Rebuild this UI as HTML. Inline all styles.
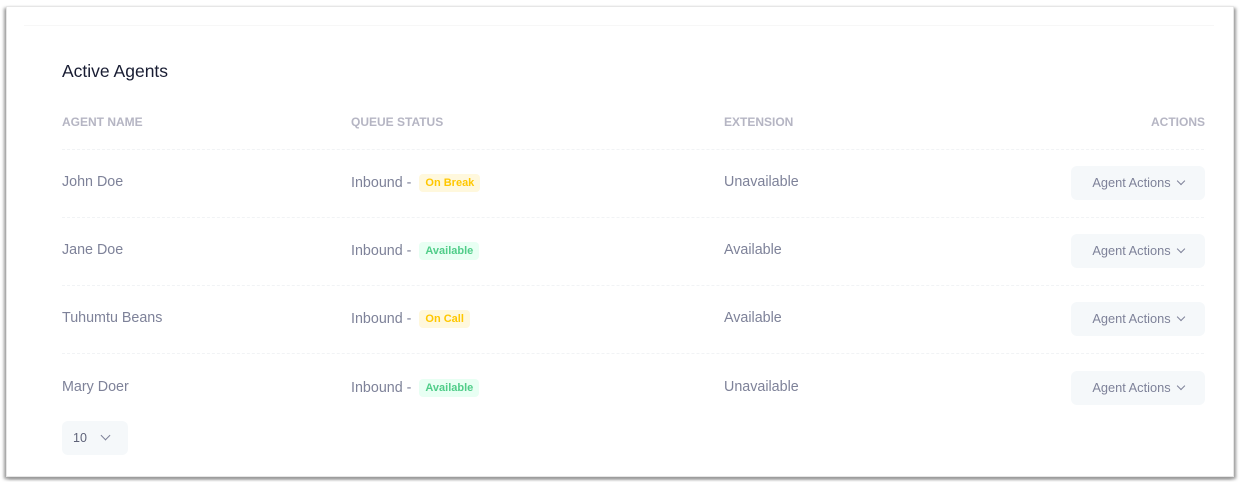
<!DOCTYPE html>
<html><head><style>
body{margin:0;width:1242px;height:482px;background:#fff;font-family:"Liberation Sans",sans-serif;position:relative;overflow:hidden}
.card{position:absolute;left:6px;top:6px;width:1226px;height:469px;background:#fff;border:1px solid #e6e6e6;box-shadow:-2px 2px 3px #9a9a9a,2px 2px 3px #9a9a9a}
.a{position:absolute;white-space:nowrap}
h1{position:absolute;left:62px;top:61px;margin:0;font-size:17.5px;font-weight:500;color:#181c32}
.th{font-size:12px;color:#b5b5c3;font-weight:600;top:115px}
.line{position:absolute;left:62px;width:1142px;border-top:1px dashed #f1f3f5}
.t{font-size:14.3px;color:#7e8299;font-weight:500}
.b{display:inline-block;font-size:11px;font-weight:700;padding:3px 6px;border-radius:4px;margin-left:4px;vertical-align:1px}
.y{background:#fff8dd;color:#ffc700}.g{background:#e8fff3;color:#50cd89}
.btn{position:absolute;left:1071px;width:134px;height:34px;background:#f5f8fa;border-radius:6px;font-size:12.8px;color:#7e8299;line-height:34px;text-align:center}
.chev{display:inline-block;width:5px;height:5px;border-right:1.5px solid #7e8299;border-bottom:1.5px solid #7e8299;transform:rotate(45deg);margin-left:7px;vertical-align:3px}
</style></head><body>
<div class="card"></div>
<div class="a" style="left:24px;top:25px;width:1190px;border-top:1px solid #f7f7f7"></div>
<h1>Active Agents</h1>
<div class="a th" style="left:62px">AGENT NAME</div>
<div class="a th" style="left:351px">QUEUE STATUS</div>
<div class="a th" style="left:724px">EXTENSION</div>
<div class="a th" style="left:1149px;width:56px;text-align:right">ACTIONS</div>
<div class="line" style="top:149px"></div>
<div class="line" style="top:217px"></div>
<div class="line" style="top:285px"></div>
<div class="line" style="top:353px"></div>

<div class="a t" style="left:62px;top:174px">John Doe</div>
<div class="a t" style="left:351px;top:174px">Inbound - <span class="b y">On Break</span></div>
<div class="a t" style="left:724px;top:174px">Unavailable</div>
<div class="btn" style="top:166px">Agent Actions<span class="chev"></span></div>

<div class="a t" style="left:62px;top:242px">Jane Doe</div>
<div class="a t" style="left:351px;top:242px">Inbound - <span class="b g">Available</span></div>
<div class="a t" style="left:724px;top:242px">Available</div>
<div class="btn" style="top:234px">Agent Actions<span class="chev"></span></div>

<div class="a t" style="left:62px;top:310px">Tuhumtu Beans</div>
<div class="a t" style="left:351px;top:310px">Inbound - <span class="b y">On Call</span></div>
<div class="a t" style="left:724px;top:310px">Available</div>
<div class="btn" style="top:302px">Agent Actions<span class="chev"></span></div>

<div class="a t" style="left:62px;top:379px">Mary Doer</div>
<div class="a t" style="left:351px;top:379px">Inbound - <span class="b g">Available</span></div>
<div class="a t" style="left:724px;top:379px">Unavailable</div>
<div class="btn" style="top:371px">Agent Actions<span class="chev"></span></div>

<div class="a" style="left:62px;top:421px;width:66px;height:34px;background:#f5f8fa;border-radius:6px;font-size:12.5px;color:#5e6278;line-height:34px"><span style="margin-left:11px">10</span><span class="chev" style="margin-left:15px;width:6px;height:6px"></span></div>
</body></html>
